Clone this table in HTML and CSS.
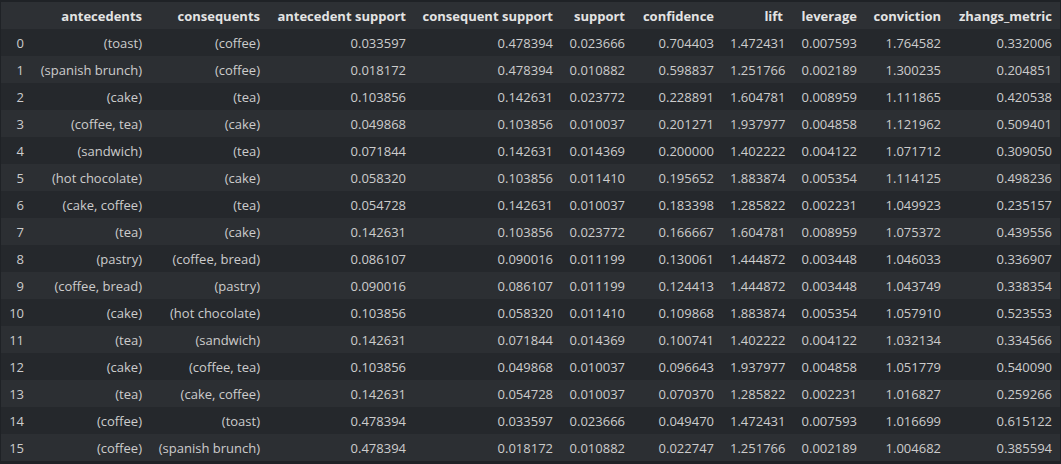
FILE: index.html
```html
<!DOCTYPE html>
<html>
<head>
<meta charset="utf-8">
<link rel="stylesheet" href="styles.css">
</head>
<body>
<table class="df">
  <colgroup>
    <col class="c-idx"><col class="c-ant"><col class="c-con"><col class="c-asup"><col class="c-csup"><col class="c-sup"><col class="c-conf"><col class="c-lift"><col class="c-lev"><col class="c-conv"><col class="c-zh">
  </colgroup>
  <thead>
    <tr><th></th><th>antecedents</th><th>consequents</th><th>antecedent support</th><th>consequent support</th><th>support</th><th>confidence</th><th>lift</th><th>leverage</th><th>conviction</th><th>zhangs_metric</th></tr>
  </thead>
  <tbody>
    <tr><th>0</th><td>(toast)</td><td>(coffee)</td><td>0.033597</td><td>0.478394</td><td>0.023666</td><td>0.704403</td><td>1.472431</td><td>0.007593</td><td>1.764582</td><td>0.332006</td></tr>
    <tr><th>1</th><td>(spanish brunch)</td><td>(coffee)</td><td>0.018172</td><td>0.478394</td><td>0.010882</td><td>0.598837</td><td>1.251766</td><td>0.002189</td><td>1.300235</td><td>0.204851</td></tr>
    <tr><th>2</th><td>(cake)</td><td>(tea)</td><td>0.103856</td><td>0.142631</td><td>0.023772</td><td>0.228891</td><td>1.604781</td><td>0.008959</td><td>1.111865</td><td>0.420538</td></tr>
    <tr><th>3</th><td>(coffee, tea)</td><td>(cake)</td><td>0.049868</td><td>0.103856</td><td>0.010037</td><td>0.201271</td><td>1.937977</td><td>0.004858</td><td>1.121962</td><td>0.509401</td></tr>
    <tr><th>4</th><td>(sandwich)</td><td>(tea)</td><td>0.071844</td><td>0.142631</td><td>0.014369</td><td>0.200000</td><td>1.402222</td><td>0.004122</td><td>1.071712</td><td>0.309050</td></tr>
    <tr><th>5</th><td>(hot chocolate)</td><td>(cake)</td><td>0.058320</td><td>0.103856</td><td>0.011410</td><td>0.195652</td><td>1.883874</td><td>0.005354</td><td>1.114125</td><td>0.498236</td></tr>
    <tr><th>6</th><td>(cake, coffee)</td><td>(tea)</td><td>0.054728</td><td>0.142631</td><td>0.010037</td><td>0.183398</td><td>1.285822</td><td>0.002231</td><td>1.049923</td><td>0.235157</td></tr>
    <tr><th>7</th><td>(tea)</td><td>(cake)</td><td>0.142631</td><td>0.103856</td><td>0.023772</td><td>0.166667</td><td>1.604781</td><td>0.008959</td><td>1.075372</td><td>0.439556</td></tr>
    <tr><th>8</th><td>(pastry)</td><td>(coffee, bread)</td><td>0.086107</td><td>0.090016</td><td>0.011199</td><td>0.130061</td><td>1.444872</td><td>0.003448</td><td>1.046033</td><td>0.336907</td></tr>
    <tr><th>9</th><td>(coffee, bread)</td><td>(pastry)</td><td>0.090016</td><td>0.086107</td><td>0.011199</td><td>0.124413</td><td>1.444872</td><td>0.003448</td><td>1.043749</td><td>0.338354</td></tr>
    <tr><th>10</th><td>(cake)</td><td>(hot chocolate)</td><td>0.103856</td><td>0.058320</td><td>0.011410</td><td>0.109868</td><td>1.883874</td><td>0.005354</td><td>1.057910</td><td>0.523553</td></tr>
    <tr><th>11</th><td>(tea)</td><td>(sandwich)</td><td>0.142631</td><td>0.071844</td><td>0.014369</td><td>0.100741</td><td>1.402222</td><td>0.004122</td><td>1.032134</td><td>0.334566</td></tr>
    <tr><th>12</th><td>(cake)</td><td>(coffee, tea)</td><td>0.103856</td><td>0.049868</td><td>0.010037</td><td>0.096643</td><td>1.937977</td><td>0.004858</td><td>1.051779</td><td>0.540090</td></tr>
    <tr><th>13</th><td>(tea)</td><td>(cake, coffee)</td><td>0.142631</td><td>0.054728</td><td>0.010037</td><td>0.070370</td><td>1.285822</td><td>0.002231</td><td>1.016827</td><td>0.259266</td></tr>
    <tr><th>14</th><td>(coffee)</td><td>(toast)</td><td>0.478394</td><td>0.033597</td><td>0.023666</td><td>0.049470</td><td>1.472431</td><td>0.007593</td><td>1.016699</td><td>0.615122</td></tr>
    <tr><th>15</th><td>(coffee)</td><td>(spanish brunch)</td><td>0.478394</td><td>0.018172</td><td>0.010882</td><td>0.022747</td><td>1.251766</td><td>0.002189</td><td>1.004682</td><td>0.385594</td></tr>
  </tbody>
</table>
</body>
</html>
```

FILE: styles.css
```css
html, body {
  margin: 0;
  background: #1f2226;
}
body {
  padding: 2px 0 0 1px;
  font-family: "Open Sans", "Noto Sans", sans-serif;
  font-size: 13px;
  color: #cccccc;
}
.df {
  border-collapse: collapse;
  table-layout: fixed;
  width: 1059px;
}
.c-idx { width: 31px; }
.c-ant { width: 118px; }
.c-con { width: 118px; }
.c-asup { width: 146px; }
.c-csup { width: 147px; }
.c-sup { width: 72px; }
.c-conf { width: 89px; }
.c-lift { width: 69px; }
.c-lev { width: 74px; }
.c-conv { width: 84px; }
.c-zh { width: 111px; }
.df th, .df td {
  height: 27px;
  padding: 0 8px;
  text-align: right;
  white-space: nowrap;
  box-sizing: border-box;
  vertical-align: middle;
}
.df thead tr {
  background: #2d3034;
}
.df thead th {
  font-weight: 700;
  color: #e3e3e3;
}
.df tbody tr:nth-child(odd) {
  background: #25282c;
}
.df tbody tr:nth-child(even) {
  background: #2c2f33;
}
.df tbody th {
  font-weight: 400;
  color: #cccccc;
}
```
